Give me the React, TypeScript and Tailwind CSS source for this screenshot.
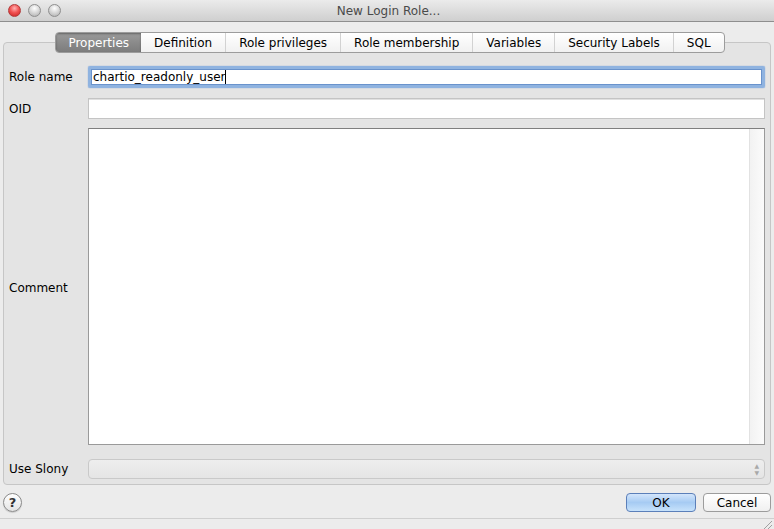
import React from 'react';

const tabs = ['Properties', 'Definition', 'Role privileges', 'Role membership', 'Variables', 'Security Labels', 'SQL'];

const TrafficLight = ({ red }: { red?: boolean }) => (
  <div
    className={`w-[13px] h-[13px] rounded-full border ${
      red
        ? 'border-[#b23a3a] bg-[radial-gradient(circle_at_50%_30%,#ffb3b3_0%,#f25555_45%,#c81e1e_100%)]'
        : 'border-[#8f8f8f] bg-[radial-gradient(circle_at_50%_30%,#ffffff_0%,#d6d6d6_50%,#a9a9a9_100%)]'
    }`}
  />
);

const Label = ({ children }: { children: React.ReactNode }) => (
  <div className="w-[79px] shrink-0 text-[12px] text-black">{children}</div>
);

const App = () => {
  return (
    <div
      className="w-[774px] h-[529px] flex flex-col bg-[#ececec] overflow-hidden"
      style={{ fontFamily: '"DejaVu Sans", "Liberation Sans", sans-serif' }}
    >
      {/* title bar */}
      <div className="h-[22px] shrink-0 flex items-center relative bg-gradient-to-b from-[#ebebeb] to-[#cfcfcf] border-b border-[#8e8e8e]">
        <div className="flex items-center gap-[7px] pl-[8px]">
          <TrafficLight red />
          <TrafficLight />
          <TrafficLight />
        </div>
        <div className="flex-1 text-center text-[12px] text-[#4a4a4a] pr-[58px]">New Login Role...</div>
      </div>

      {/* tabs */}
      <div className="mt-[10px] -mb-[11px] relative z-10 flex justify-center pl-[6px]">
        <div className="flex h-[21px] rounded-[4px] border border-[#9c9c9c] bg-gradient-to-b from-[#ffffff] to-[#f1f1f1] overflow-hidden">
          {tabs.map((t, i) => (
            <div
              key={t}
              className={`flex items-center text-[12px] ${
                i === 0
                  ? 'px-[12px] bg-gradient-to-b from-[#9a9a9a] to-[#7c7c7c] text-white shadow-[inset_0_1px_2px_rgba(0,0,0,0.35)]'
                  : 'px-[13px] text-black'
              } ${i > 1 ? 'border-l border-[#d2d2d2]' : ''}`}
            >
              {t}
            </div>
          ))}
        </div>
      </div>

      {/* panel */}
      <div className="mx-[3px] h-[443px] shrink-0 rounded-[4px] border border-[#c6c6c6] bg-[#e4e4e4] flex flex-col pt-[23px] pl-[5px] pr-[5px]">
        <div className="flex items-center h-[22px]">
          <Label>Role name</Label>
          <div className="flex-1 h-[22px] border-[3px] border-[#8fb3e0] rounded-[2px] p-0 shadow-[0_0_1px_#4f86cf]">
            <div className="h-full bg-white border border-[#6a93cc] flex items-center pl-[1px] text-[12px] text-black">
              chartio_readonly_user
              <span className="inline-block w-0 h-[14px] border-l border-black" />
            </div>
          </div>
        </div>

        <div className="flex items-center h-[21px] mt-[10px]">
          <Label>OID</Label>
          <div className="flex-1 h-[21px] bg-white border border-[#c4c4c4] shadow-[inset_0_1px_0_#e0e0e0]" />
        </div>

        <div className="flex items-center h-[317px] mt-[9px]">
          <Label>
            <div className="pt-[3px]">Comment</div>
          </Label>
          <div className="flex-1 h-full bg-white border border-[#9a9a9a] border-t-[#7f7f7f] flex justify-end">
            <div className="w-[15px] h-full border-l border-[#e2e2e2] bg-gradient-to-r from-[#f2f2f2] to-[#fbfbfb]" />
          </div>
        </div>

        <div className="flex items-center h-[20px] mt-[14px]">
          <Label>Use Slony</Label>
          <div className="flex-1 h-[20px] rounded-[4px] border border-[#c9c9c9] bg-gradient-to-b from-[#eeeeee] to-[#e5e5e5] flex items-center justify-end pr-[5px]">
            <div className="flex flex-col items-center leading-none text-[#a8a8a8] text-[6px] gap-[1px]">
              <span>▲</span>
              <span>▼</span>
            </div>
          </div>
        </div>
      </div>

      {/* footer */}
      <div className="h-[33px] shrink-0 flex items-center pl-[3px] pr-[3px] pt-[2px]">
        <div className="w-[19px] h-[19px] rounded-full border border-[#8a8a8a] bg-gradient-to-b from-[#ffffff] to-[#e4e4e4] flex items-center justify-center text-[13px] font-bold text-[#333] shadow-[0_1px_1px_rgba(0,0,0,0.15)]">
          ?
        </div>
        <div className="flex-1" />
        <div className="flex gap-[7px]">
          <div className="w-[70px] h-[19px] rounded-[4px] border border-[#5b7fb9] bg-gradient-to-b from-[#d3e5fb] via-[#a6cbf3] to-[#c7e2fb] flex items-center justify-center text-[12px] text-black">
            OK
          </div>
          <div className="w-[68px] h-[19px] rounded-[4px] border border-[#9c9c9c] bg-gradient-to-b from-[#ffffff] to-[#f0f0f0] flex items-center justify-center text-[12px] text-black">
            Cancel
          </div>
        </div>
      </div>

      {/* bottom strip */}
      <div className="flex-1 border-t border-[#cfcfcf] bg-[#ececec] flex justify-end items-end">
        <svg width="11" height="11" viewBox="0 0 11 11" className="mb-[1px] mr-[1px]">
          <line x1="10" y1="2" x2="2" y2="10" stroke="#a0a0a0" strokeWidth="1" />
          <line x1="10" y1="6" x2="6" y2="10" stroke="#a0a0a0" strokeWidth="1" />
        </svg>
      </div>
    </div>
  );
};

export default App;
